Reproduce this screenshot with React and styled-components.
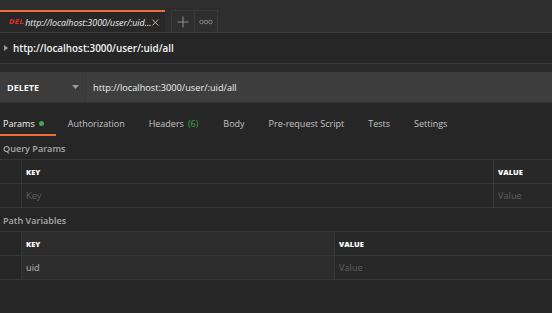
import React from 'react'
import styled, { createGlobalStyle } from 'styled-components'

const GlobalStyle = createGlobalStyle`
  html, body { margin: 0; padding: 0; background: #262626; }
  body { font-family: "Open Sans", "Liberation Sans", sans-serif; }
`

const tabs = [
  { label: 'Params', active: true, dot: true },
  { label: 'Authorization' },
  { label: 'Headers', count: 6 },
  { label: 'Body' },
  { label: 'Pre-request Script' },
  { label: 'Tests' },
  { label: 'Settings' },
]

// Tab strip
const RequestTabs = () => (
  <TabBar>
    <OpenTab>
      <MethodBadge>DEL</MethodBadge>
      <OpenTabTitle>http://localhost:3000/user/:uid...</OpenTabTitle>
      <CloseIcon viewBox="0 0 10 10">
        <path d="M1.5 1.5 L8.5 8.5 M8.5 1.5 L1.5 8.5" stroke="#c4c4c4" strokeWidth="1.1" />
      </CloseIcon>
    </OpenTab>
    <TabActions>
      <TabAction>
        <svg width="12" height="12" viewBox="0 0 12 12">
          <path d="M6 0.5 V11.5 M0.5 6 H11.5" stroke="#8a8a8a" strokeWidth="1.1" />
        </svg>
      </TabAction>
      <TabAction>
        <svg width="14" height="6" viewBox="0 0 14 6">
          <circle cx="2.5" cy="3" r="1.8" fill="none" stroke="#8a8a8a" strokeWidth="0.9" />
          <circle cx="7" cy="3" r="1.8" fill="none" stroke="#8a8a8a" strokeWidth="0.9" />
          <circle cx="11.5" cy="3" r="1.8" fill="none" stroke="#8a8a8a" strokeWidth="0.9" />
        </svg>
      </TabAction>
    </TabActions>
  </TabBar>
)

const ParamTable = ({ keyWidth, keyShade, rows }) => (
  <Table>
    <TableRow>
      <Gutter />
      <Cell width={keyWidth} shade={keyShade} header>KEY</Cell>
      <Cell header>VALUE</Cell>
    </TableRow>
    {rows.map((r, i) => (
      <TableRow key={i}>
        <Gutter />
        <Cell width={keyWidth} shade={keyShade} placeholder={!r.key}>{r.key || 'Key'}</Cell>
        <Cell placeholder={!r.value}>{r.value || 'Value'}</Cell>
      </TableRow>
    ))}
  </Table>
)

const App = () => (
  <Page>
    <GlobalStyle />
    <RequestTabs />
    <TitleRow>
      <Caret viewBox="0 0 4 6">
        <path d="M0 0 L4 3 L0 6 Z" fill="#9a9a9a" />
      </Caret>
      <RequestName>http://localhost:3000/user/:uid/all</RequestName>
    </TitleRow>
    <RequestArea>
      <UrlBar>
        <MethodSelect>
          DELETE
          <svg width="7" height="4" viewBox="0 0 7 4">
            <path d="M0 0 H7 L3.5 4 Z" fill="#9a9a9a" />
          </svg>
        </MethodSelect>
        <UrlInput>http://localhost:3000/user/:uid/all</UrlInput>
      </UrlBar>
    </RequestArea>
    <SubTabs>
      {tabs.map(t => (
        <SubTab key={t.label} active={t.active}>
          {t.label}
          {t.dot && <GreenDot />}
          {t.count && <Count>({t.count})</Count>}
        </SubTab>
      ))}
    </SubTabs>
    <SectionTitle>Query Params</SectionTitle>
    <ParamTable keyWidth={467} keyShade="#272727" rows={[{}]} />
    <SectionTitle>Path Variables</SectionTitle>
    <ParamTable keyWidth={308} keyShade="#2d2d2d" rows={[{ key: 'uid' }]} />
  </Page>
)

// Styles
const Page = styled.div`
  width: 552px;
  height: 313px;
  overflow: hidden;
  background: #262626;
`

const TabBar = styled.div`
  height: 33px;
  box-sizing: border-box;
  display: flex;
  align-items: flex-end;
  background: #2e2e2e;
  border-bottom: 1px solid #3c3c3c;
`

const OpenTab = styled.div`
  width: 165px;
  height: 22px;
  box-sizing: border-box;
  border-top: 2px solid #f26b3a;
  background: #282828;
  display: flex;
  align-items: center;
  padding: 0 5px 0 9px;
`

const MethodBadge = styled.span`
  width: 17px;
  color: #e0282e;
  font-family: "DejaVu Sans", sans-serif;
  font-size: 6.5px;
  font-weight: bold;
  font-style: italic;
  letter-spacing: 0.3px;
`

const OpenTabTitle = styled.span`
  flex: 1;
  color: #f0f0f0;
  font-size: 8.9px;
  font-style: italic;
  white-space: nowrap;
`

const CloseIcon = styled.svg`
  width: 9px;
  height: 9px;
`

const TabActions = styled.div`
  display: flex;
  height: 22px;
  margin-left: 6px;
  box-sizing: border-box;
  border: 1px solid #393939;
  border-bottom: none;
`

const TabAction = styled.div`
  width: 22px;
  display: flex;
  align-items: center;
  justify-content: center;
  & + & { border-left: 1px solid #393939; }
`

const TitleRow = styled.div`
  height: 30px;
  display: flex;
  align-items: center;
  padding-left: 4px;
  background: #262626;
  border-bottom: 1px solid #3a3a3a;
`

const Caret = styled.svg`
  width: 4px;
  height: 6px;
  margin-right: 5px;
`

const RequestName = styled.span`
  color: #f4f4f4;
  font-size: 9.9px;
  font-weight: 600;
`

const RequestArea = styled.div`
  padding-top: 8px;
  background: #2a2a2a;
`

const UrlBar = styled.div`
  height: 30px;
  display: flex;
  background: #3c3c3c;
  border-bottom: 1px solid #333;
`

const MethodSelect = styled.div`
  width: 86px;
  box-sizing: border-box;
  padding: 0 6px 0 7px;
  display: flex;
  align-items: center;
  justify-content: space-between;
  color: #f4f4f4;
  font-size: 9px;
  font-weight: 700;
  border-right: 1px solid #363636;
`

const UrlInput = styled.div`
  flex: 1;
  display: flex;
  align-items: center;
  padding-left: 7px;
  color: #f0f0f0;
  font-size: 9.2px;
  background: #3e3e3e;
`

const SubTabs = styled.div`
  height: 33px;
  display: flex;
`

const SubTab = styled.div`
  display: flex;
  align-items: center;
  padding: 9px 12px 0 12px;
  font-size: 9px;
  color: ${p => (p.active ? '#f4f4f4' : '#c4c4c4')};
  border-bottom: 2px solid ${p => (p.active ? '#f26b3a' : 'transparent')};
  &:first-child { padding: 9px 12px 0 3px; }
`

const GreenDot = styled.span`
  width: 5px;
  height: 5px;
  border-radius: 50%;
  background: #3aab4a;
  margin-left: 4px;
`

const Count = styled.span`
  color: #3aab4a;
  margin-left: 4px;
  padding-right: 1px;
`

const SectionTitle = styled.div`
  height: 24px;
  box-sizing: border-box;
  display: flex;
  align-items: center;
  padding: 1px 0 0 3px;
  color: #a9a9a9;
  font-size: 9.1px;
  font-weight: 600;
  border-bottom: 1px solid #363636;
`

const Table = styled.div`
  display: flex;
  flex-direction: column;
`

const TableRow = styled.div`
  height: 24px;
  box-sizing: border-box;
  display: flex;
  border-bottom: 1px solid #363636;
`

const Gutter = styled.div`
  width: 21px;
  background: #272727;
  border-right: 1px solid #363636;
`

const Cell = styled.div`
  ${p => (p.width ? `width: ${p.width}px; border-right: 1px solid #363636;` : 'flex: 1;')}
  display: flex;
  align-items: center;
  padding-left: 4px;
  background: ${p => p.shade || '#282828'};
  color: ${p => (p.header ? '#ffffff' : p.placeholder ? '#5f5f5f' : '#bdbdbd')};
  font-size: ${p => (p.header ? '7.5px' : '9.2px')};
  font-weight: ${p => (p.header ? 800 : 400)};
`

export default App
